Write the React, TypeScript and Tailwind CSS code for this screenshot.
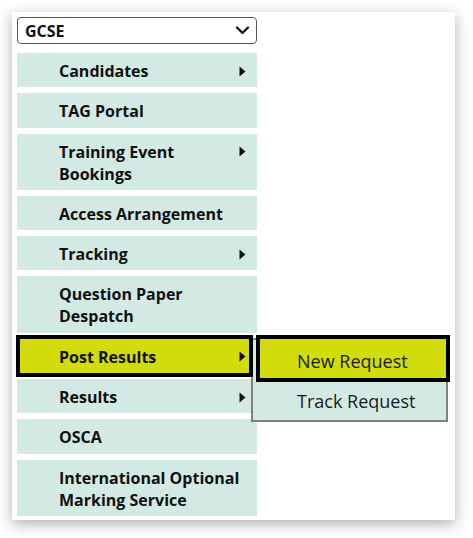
import React from "react";

type Item = { label: React.ReactNode; sub?: boolean };

const items: Item[] = [
  { label: "Candidates", sub: true },
  { label: "TAG Portal" },
  { label: "Training Event Bookings", sub: true },
  { label: "Access Arrangement" },
  { label: "Tracking", sub: true },
  { label: "Question Paper Despatch" },
  { label: "Post Results", sub: true },
  { label: "Results", sub: true },
  { label: "OSCA" },
  { label: "International Optional Marking Service" },
];

function Caret() {
  return (
    <svg width="7" height="11" viewBox="0 0 7 11" className="block">
      <path d="M0.5 0.5 L6.5 5.5 L0.5 10.5 Z" fill="#111" />
    </svg>
  );
}

function Chevron() {
  return (
    <svg width="15" height="9" viewBox="0 0 15 9" className="block">
      <path d="M2 1.5 L7.5 7 L13 1.5" fill="none" stroke="#111" strokeWidth="2.2" strokeLinecap="round" strokeLinejoin="round" />
    </svg>
  );
}

export default function App() {
  return (
    <div className="min-h-[538px] w-[473px] bg-white pl-[12px] pt-[12px] font-['Open_Sans',sans-serif] text-[#111]">
      <div className="relative w-[443px] bg-white px-[5px] pb-[4px] pt-[5px] shadow-[0_4px_14px_rgba(0,0,0,0.32)]">
        {/* Qualification select */}
        <div className="flex h-[27px] w-[240px] items-center justify-between rounded-[4px] border border-[#555] pl-[7px] pr-[6px]">
          <span className="text-[16px] font-bold leading-none">GCSE</span>
          <Chevron />
        </div>

        {/* Menu */}
        <ul className="mt-[9px] flex w-[240px] flex-col gap-[6px]">
          {items.map((item) => {
            const active = item.label === "Post Results";
            return (
              <li
                key={String(item.label)}
                className={
                  active
                    ? "relative z-20 ml-[3px] flex w-[229px] items-start justify-between bg-[#d3dc0b] pb-[5.3px] pl-[39px] pr-[3.5px] pt-[7px] outline outline-4 outline-black"
                    : "flex items-start justify-between bg-[#d3eae4] pb-[5.3px] pl-[42px] pr-[11.5px] pt-[7px]"
                }
              >
                <span className="text-[16px] font-bold leading-[22px]">{item.label}</span>
                {item.sub && (
                  <span className="flex h-[22px] shrink-0 items-center pl-[4px]">
                    <Caret />
                  </span>
                )}
              </li>
            );
          })}
        </ul>

        {/* Post Results submenu */}
        <div className="absolute left-[239px] top-[326px] z-10 w-[197px] border-2 border-[#808080] bg-[#d3eae4] text-[18px] text-[#1a1a1a]">
          <div className="-mr-[4px] -mt-[5px] ml-[3px] flex h-[47px] items-center border-4 border-black bg-[#d3dc0b] pl-[37px] pt-[6px]">
            New Request
          </div>
          <div className="flex h-[38px] items-center pl-[44px] pt-[1px]">Track Request</div>
        </div>
      </div>
    </div>
  );
}
